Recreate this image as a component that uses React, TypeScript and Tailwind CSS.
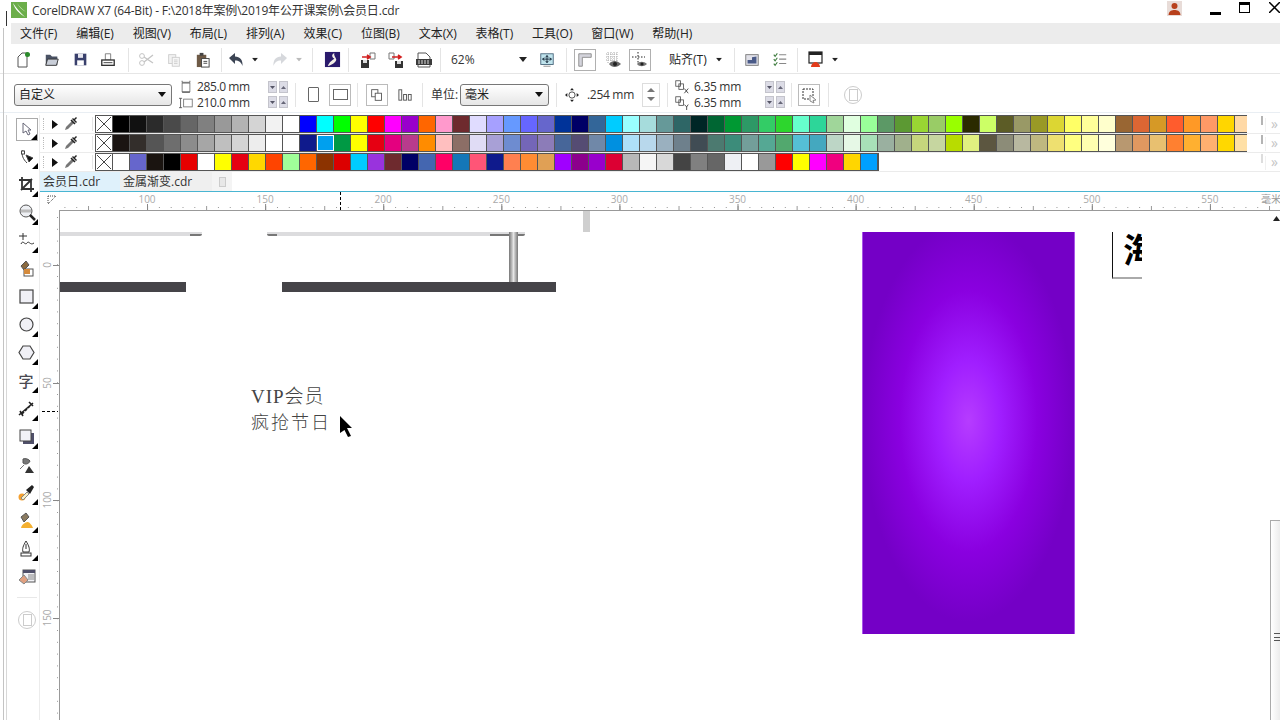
import type { ReactNode } from "react";

const row1 = [
	"#000000", "#111111", "#2b2b2b", "#4a4a4a", "#666666", "#808080", "#999999", "#b3b3b3", "#d4d4d4", "#f2f2f2", "#ffffff",
	"#0000ff", "#00ffff", "#00ff00", "#ffff00", "#ff0000", "#ff00ff", "#9900cc", "#ff6600", "#ff99cc", "#6e2a2e", "#e0dcff",
	"#a6a0ff", "#6699ff", "#6666ff", "#6666cc", "#003399", "#000066", "#336699", "#00ccff", "#99ffff", "#a6dcdc", "#669999",
	"#2e6666", "#002626", "#006633", "#009933", "#2d9966", "#33cc66", "#2dd62d", "#66ffcc", "#2dd699", "#a0d69a", "#e0ffe0",
	"#99ff99", "#5c9966", "#5c9933", "#99d633", "#99cc66", "#99ff00", "#2b2b00", "#ccff66", "#5c5c26", "#999966", "#999926",
	"#dcd633", "#ffff66", "#ffff99", "#ffffcc", "#996633", "#dc6633", "#d69926", "#ff5c2d", "#ff9926", "#ff9966", "#ffd600", "#ffd9a6",
];
const row2 = [
	"#1a1412", "#332e2b", "#555555", "#6e6e6e", "#8c8c8c", "#a6a6a6", "#bfbfbf", "#d4d4d4", "#ededed", "#ffffff", "#ffffff",
	"#0f1a8c", "#00a0ee", "#009944", "#ffff00", "#e60012", "#e4007f", "#b83b8c", "#ff8c00", "#ffbfbf", "#8c6e66", "#e0dcf5",
	"#a8a0d6", "#6e8cd0", "#7466b8", "#8c7cb8", "#476699", "#554c73", "#7088a8", "#0090e0", "#aee0f8", "#b8d8ec", "#9ab0bf",
	"#6e808c", "#404c54", "#4c7a70", "#3c8c7a", "#739e9a", "#55a894", "#52a86e", "#55bfd6", "#44a8bf", "#bdd6c6", "#e6f8e6",
	"#a8e0b8", "#9ab0a0", "#a0b08c", "#c6d67c", "#c6d6a0", "#b8dc00", "#e0f080", "#5c5640", "#8c8c78", "#b8b8a0", "#bfb880",
	"#eee070", "#ffff80", "#ffffb0", "#ffffdc", "#b89870", "#e09860", "#e8c070", "#ff8030", "#ffb030", "#ffb070", "#ffd800", "#ffe0a6",
];
const row3 = [
	"#ffffff", "#6666cc", "#1a1410", "#000000", "#e60000", "#ffffff", "#ffff00", "#e60012", "#ffd800", "#ff4400", "#a0ff99",
	"#ff6600", "#8c3300", "#dc0000", "#00ccff", "#9933dd", "#6e2a2e", "#000066", "#4466b0", "#ff0066", "#1477b8", "#ff5577",
	"#0f1a8c", "#ff8050", "#ff8c33", "#e0a055", "#a000ff", "#8c008c", "#9900cc", "#dc0033", "#b8b8b8", "#f5f5f5", "#d8d8d8",
	"#444444", "#808080", "#666666", "#eef0f4", "#ffffff", "#999999", "#ff0000", "#ffff00", "#ff00ff", "#f0007f", "#ffd600", "#00a0ff",
];

const menus = ["文件(F)", "编辑(E)", "视图(V)", "布局(L)", "排列(A)", "效果(C)", "位图(B)", "文本(X)", "表格(T)", "工具(O)", "窗口(W)", "帮助(H)"];

function Icon({ children, size = 18 }: { children: ReactNode; size?: number }) {
	return (
		<svg width={size} height={size} viewBox="0 0 18 18" fill="none">
			{children}
		</svg>
	);
}

function Cell({ w = "w-[28px]", children }: { w?: string; children: ReactNode }) {
	return <div className={`${w} h-full flex items-center justify-center shrink-0`}>{children}</div>;
}

function Sep() {
	return <div className="w-px h-[24px] bg-[#e4e4e4] shrink-0" />;
}

function DownArrow({ color = "#222" }: { color?: string }) {
	return (
		<svg width="8" height="5" viewBox="0 0 8 5">
			<path d="M0 0H8L4 5Z" fill={color} />
		</svg>
	);
}

function Spinner() {
	return (
		<div className="flex flex-col gap-[3px] shrink-0">
			{[0, 1].map((i) => (
				<div key={i} className="flex gap-[2px]">
					<div className="w-[9px] h-[12px] bg-[#dcdce6] border border-[#c4c4cc] flex items-center justify-center">
						<svg width="5" height="3" viewBox="0 0 5 3">
							<path d="M0 0H5L2.5 3Z" fill="#556" />
						</svg>
					</div>
					<div className="w-[9px] h-[12px] bg-[#dcdce6] border border-[#c4c4cc] flex items-center justify-center">
						<svg width="5" height="3" viewBox="0 0 5 3">
							<path d="M0 3H5L2.5 0Z" fill="#667" />
						</svg>
					</div>
				</div>
			))}
		</div>
	);
}

function Combo({ label, w }: { label: string; w: string }) {
	return (
		<div className={`${w} h-[22px] shrink-0 flex items-center justify-between px-[4px] border border-[#777] rounded-[3px] bg-linear-to-b from-white to-[#e6e6e6] text-[12px] text-[#222]`}>
			<span>{label}</span>
			<span className="mr-[1px] flex">
				<DownArrow color="#111" />
			</span>
		</div>
	);
}

function TitleBar() {
	return (
		<div className="h-[23px] flex items-center relative shrink-0">
			<div className="w-px h-[15px] bg-[#333] ml-[6px] mt-[14px]" />
			<svg className="ml-[4px] mb-[3px]" width="16" height="16" viewBox="0 0 16 16">
				<rect width="16" height="16" fill="#6cae4a" />
				<path d="M2 1C5 6 9 10 14 15C9 12 4 8 2 1Z" fill="#fff" />
				<path d="M6 1C8 4 11 7 15 10C11 8 8 5 6 1Z" fill="#dff0d0" />
			</svg>
			<span className="ml-[5px] mb-[2px] text-[12px] tracking-[-0.18px] text-[#333] whitespace-nowrap">CorelDRAW X7 (64-Bit) - F:\2018年案例\2019年公开课案例\会员日.cdr</span>
			<div className="ml-auto flex items-center">
				<svg width="15" height="15" viewBox="0 0 15 15" className="mb-[6px]">
					<rect width="15" height="15" fill="#e8dcd8" />
					<circle cx="7.5" cy="5" r="3" fill="#b8401c" />
					<path d="M1.5 14C2 9.5 5 9 7.5 9S13 9.5 13.5 14Z" fill="#b8401c" />
				</svg>
				<div className="w-[11px] h-[3px] bg-black ml-[28px] mt-[3px]" />
				<div className="w-[11px] h-[11px] border border-black border-t-[3px] ml-[18px] mb-[9px]" />
				<svg className="ml-[19px] mb-[9px]" width="11" height="11" viewBox="0 0 11 11">
					<path d="M0 0L11 11M11 0L0 11" stroke="#000" strokeWidth="1.5" />
				</svg>
			</div>
		</div>
	);
}

function MenuBar() {
	return (
		<div className="h-[21px] ml-[11px] pl-[9px] bg-[#ececec] flex items-center gap-[18.85px] text-[12px] text-[#222] shrink-0">
			{menus.map((m) => (
				<span key={m} className="whitespace-nowrap">
					{m}
				</span>
			))}
		</div>
	);
}

function MainToolbar() {
	return (
		<div className="h-[30px] pl-[10px] pt-[2px] flex items-center border-b border-[#e6e6e6] shrink-0">
			<Cell>
				<Icon>
					<path d="M3 16V6L7 2H12V16Z" fill="#fff" stroke="#555" />
					<circle cx="12.5" cy="3.5" r="2.5" fill="#2a8a2a" />
				</Icon>
			</Cell>
			<Cell>
				<Icon size={16}>
					<path d="M2 15V3H7L9 5H15V15Z" fill="#4a5264" />
					<path d="M2 15L4 8H16L14 15Z" fill="#c9ced8" stroke="#333" />
				</Icon>
			</Cell>
			<Cell>
				<Icon size={15}>
					<rect x="2" y="2" width="14" height="14" fill="#39406c" />
					<rect x="6" y="2" width="6" height="5" fill="#e6e6ee" />
					<rect x="5" y="10" width="8" height="6" fill="#fff" />
				</Icon>
			</Cell>
			<Cell>
				<Icon size={16}>
					<path d="M6 2H12V9H6Z" fill="#fff" stroke="#777" />
					<rect x="2" y="9" width="14" height="6" fill="#fff" stroke="#333" strokeWidth="1.5" />
					<path d="M4 12H14" stroke="#333" />
				</Icon>
			</Cell>
			<div className="w-[6px]" />
			<Sep />
			<div className="w-[3px]" />
			<Cell>
				<Icon>
					<path d="M16 4L7 11M16 12L7 6" stroke="#c4c4c4" strokeWidth="1.3" />
					<circle cx="5" cy="5" r="2.4" stroke="#c4c4c4" />
					<circle cx="5" cy="12" r="2.4" stroke="#c4c4c4" />
				</Icon>
			</Cell>
			<Cell>
				<Icon size={16}>
					<rect x="3" y="3" width="8" height="10" fill="#f2f2f2" stroke="#ccc" />
					<rect x="7" y="6" width="8" height="10" fill="#f6f6f6" stroke="#ccc" />
					<path d="M9 9H13M9 11H13M9 13H13" stroke="#ccc" />
				</Icon>
			</Cell>
			<Cell>
				<Icon size={17}>
					<rect x="3" y="4" width="10" height="13" fill="#6e5a46" />
					<rect x="6" y="2" width="4" height="3" fill="#444" />
					<rect x="8" y="8" width="8" height="9" fill="#fff" stroke="#444" />
					<path d="M10 11H14M10 13H14" stroke="#444" />
				</Icon>
			</Cell>
			<div className="w-[5px]" />
			<Sep />
			<div className="w-[3px]" />
			<Cell w="w-[22px]">
				<Icon>
					<path d="M2 7L8 2V5.5C13 5.5 16 9 15.5 15C14 11 12 9.5 8 9.5V13Z" fill="#3c4454" />
				</Icon>
			</Cell>
			<Cell w="w-[16px]">
				<span className="flex scale-75">
					<DownArrow />
				</span>
			</Cell>
			<div className="w-[6px]" />
			<Cell w="w-[22px]">
				<Icon>
					<path d="M16 7L10 2V5.5C5 5.5 2 9 2.5 15C4 11 6 9.5 10 9.5V13Z" fill="#d6d8dc" />
				</Icon>
			</Cell>
			<Cell w="w-[16px]">
				<span className="flex scale-75">
					<DownArrow color="#bbb" />
				</span>
			</Cell>
			<div className="w-[5px]" />
			<Sep />
			<div className="w-[5px]" />
			<Cell>
				<Icon size={17}>
					<rect x="1" y="1" width="16" height="16" fill="#2a1a6c" />
					<path d="M11 2C7 4 9 7 11 8C9 10 6 11 4 16C8 15 13 12 13 9C13 7 10 5 11 2Z" fill="#f4f0e8" />
				</Icon>
			</Cell>
			<div className="w-[2px]" />
			<Sep />
			<div className="w-[5px]" />
			<Cell>
				<Icon>
					<rect x="2" y="9" width="8" height="8" fill="#333" />
					<rect x="4" y="9" width="4" height="3" fill="#ddd" />
					<path d="M11 2H16V8H11Z" fill="#fff" stroke="#777" />
					<path d="M3 6H10M8 4L11 6L8 8" stroke="#d21f1f" strokeWidth="1.6" />
				</Icon>
			</Cell>
			<Cell>
				<Icon>
					<rect x="8" y="10" width="8" height="7" fill="#333" />
					<rect x="10" y="10" width="4" height="3" fill="#ddd" />
					<path d="M2 2H7V8H2Z" fill="#fff" stroke="#777" />
					<path d="M5 6H13M11 4L14 6L11 8" stroke="#d21f1f" strokeWidth="1.6" />
				</Icon>
			</Cell>
			<Cell>
				<Icon>
					<path d="M3 2H11L15 6V16H3Z" fill="#fff" stroke="#555" />
					<rect x="1" y="8" width="16" height="6" fill="#3b3b3b" />
					<path d="M3 10H15M3 12H15" stroke="#ddd" strokeDasharray="2 1" />
				</Icon>
			</Cell>
			<div className="w-[2px]" />
			<Sep />
			<div className="h-[22px] ml-[7px] pl-[3px] pr-[5px] flex items-center justify-between text-[12px] text-[#333] shrink-0 w-[84px]">
				<span>62%</span>
				<DownArrow />
			</div>
			<Cell w="w-[30px]">
				<Icon size={16}>
					<rect x="2" y="2" width="14" height="12" fill="#bfe3ec" stroke="#46647a" />
					<path d="M9 4V12M4 8H14M9 4L7.5 6M9 4L10.5 6M9 12L7.5 10M9 12L10.5 10M4 8L6 6.5M4 8L6 9.5M14 8L12 6.5M14 8L12 9.5" stroke="#123" />
					<path d="M5 16H13" stroke="#888" />
				</Icon>
			</Cell>
			<div className="w-[4px]" />
			<Sep />
			<div className="w-[7px]" />
			<div className="w-[22px] h-[22px] border border-[#b0b0b0] flex items-center justify-center shrink-0">
				<Icon size={16}>
					<path d="M2 2H16V6H6V16H2Z" fill="#d4d4dc" stroke="#888" />
				</Icon>
			</div>
			<div className="w-[6px]" />
			<div className="w-[22px] flex justify-center shrink-0">
				<Icon>
					<path d="M2 3H14M2 6H14M2 9H14M4 1V12M7 1V12M10 1V12M13 1V12" stroke="#aaa" strokeDasharray="1 1" />
					<path d="M5 13C8 9 13 9 17 13C13 17 8 17 5 13Z" fill="#666" />
					<circle cx="11" cy="13" r="2" fill="#222" />
				</Icon>
			</div>
			<div className="w-[5px]" />
			<div className="w-[22px] h-[22px] border border-[#b0b0b0] flex items-center justify-center shrink-0">
				<Icon>
					<path d="M7 1V12M1 6H14" stroke="#222" strokeDasharray="1.5 1.5" />
					<path d="M6 13C8 10 13 10 16 13C13 16 8 16 6 13Z" fill="#777" />
					<circle cx="11" cy="13" r="1.6" fill="#222" />
				</Icon>
			</div>
			<span className="ml-[18px] text-[12px] text-[#222] w-[42px] shrink-0 whitespace-nowrap">贴齐(T)</span>
			<div className="ml-[4px] flex w-[12px]">
				<span className="flex scale-75">
					<DownArrow />
				</span>
			</div>
			<div className="w-[7px]" />
			<Sep />
			<div className="w-[3px]" />
			<Cell>
				<Icon size={16}>
					<rect x="2" y="3" width="14" height="12" fill="#e0e0e8" stroke="#777" />
					<path d="M4 13V9H9V6L14 5V13Z" fill="#4a5a88" />
				</Icon>
			</Cell>
			<Cell>
				<Icon size={16}>
					<path d="M2 3L3.5 5L6 1.5M2 8L3.5 10L6 6.5M2 13L3.5 15L6 11.5" stroke="#3c7a3c" strokeWidth="1.2" />
					<path d="M8 3H16M8 8H16M8 13H16" stroke="#888" strokeWidth="1.2" />
				</Icon>
			</Cell>
			<div className="w-[3px]" />
			<Sep />
			<div className="w-[4px]" />
			<Cell>
				<Icon>
					<rect x="2" y="1" width="13" height="11" fill="#fff" stroke="#222" strokeWidth="1.2" />
					<rect x="2" y="1" width="13" height="3" fill="#222" />
					<path d="M4 16C4 13 7 11 8.5 11C10 11 13 13 13 16Z" fill="#e33c1c" />
				</Icon>
			</Cell>
			<div className="ml-[1px] flex">
				<span className="flex scale-75">
					<DownArrow />
				</span>
			</div>
		</div>
	);
}

function PropertyBar() {
	return (
		<div className="h-[39px] pl-[14px] pt-[3px] flex items-center border-b border-[#e9eef3] text-[12px] text-[#333] shrink-0">
			<Combo label="自定义" w="w-[158px]" />
			<div className="w-[7px] shrink-0" />
			<div className="flex flex-col gap-[2px] w-[18px] shrink-0">
				<Icon size={14}>
					<path d="M4 3H14M4 1V3M14 1V3M4 16H14" stroke="#444" />
					<rect x="4" y="4" width="10" height="11" stroke="#666" />
				</Icon>
				<Icon size={14}>
					<path d="M2 3V15M0 3H4M0 15H4" stroke="#444" />
					<rect x="6" y="4" width="11" height="10" stroke="#666" />
				</Icon>
			</div>
			<div className="w-[66px] flex flex-col leading-[16px] tracking-[-0.4px] shrink-0">
				<span>285.0 mm</span>
				<span>210.0 mm</span>
			</div>
			<div className="w-[5px] shrink-0" />
			<Spinner />
			<div className="w-[7px] shrink-0" />
			<Sep />
			<div className="w-[12px] shrink-0" />
			<div className="w-[11px] h-[15px] border border-[#666] rounded-[1px] shrink-0" />
			<div className="w-[10px] shrink-0" />
			<div className="w-[22px] h-[22px] border border-[#bbb] flex items-center justify-center shrink-0">
				<div className="w-[15px] h-[11px] border border-[#666]" />
			</div>
			<div className="w-[6px] shrink-0" />
			<Sep />
			<div className="w-[8px] shrink-0" />
			<div className="w-[22px] h-[22px] border border-[#bbb] flex items-center justify-center shrink-0">
				<Icon size={16}>
					<rect x="3" y="3" width="7" height="8" fill="#fff" stroke="#555" />
					<rect x="7" y="7" width="7" height="8" fill="#fff" stroke="#555" />
				</Icon>
			</div>
			<div className="w-[7px] shrink-0" />
			<div className="w-[20px] flex justify-center shrink-0">
				<Icon size={17}>
					<rect x="2" y="4" width="3" height="11" stroke="#555" />
					<rect x="7" y="9" width="3" height="6" stroke="#555" />
					<rect x="12" y="9" width="3" height="6" stroke="#555" />
				</Icon>
			</div>
			<div className="w-[7px] shrink-0" />
			<Sep />
			<span className="ml-[8px] w-[29px] shrink-0 whitespace-nowrap">单位:</span>
			<Combo label="毫米" w="w-[89px]" />
			<div className="w-[7px] shrink-0" />
			<Sep />
			<div className="w-[8px] shrink-0" />
			<div className="w-[14px] flex shrink-0">
				<Icon size={14}>
					<circle cx="9" cy="9" r="4" stroke="#222" />
					<path d="M9 0L6.5 3H11.5ZM9 18L6.5 15H11.5ZM0 9L3 6.5V11.5ZM18 9L15 6.5V11.5Z" fill="#222" />
				</Icon>
			</div>
			<span className="ml-[8px] w-[55px] shrink-0 whitespace-nowrap tracking-[-0.3px]">.254 mm</span>
			<div className="w-[18px] h-[24px] border border-[#ddd] flex flex-col items-center justify-evenly shrink-0">
				<svg width="8" height="4" viewBox="0 0 8 4">
					<path d="M0 4H8L4 0Z" fill="#777" />
				</svg>
				<svg width="8" height="4" viewBox="0 0 8 4">
					<path d="M0 0H8L4 4Z" fill="#777" />
				</svg>
			</div>
			<div className="w-[7px] shrink-0" />
			<Sep />
			<div className="w-[7px] shrink-0" />
			<div className="flex flex-col gap-[2px] w-[19px] shrink-0">
				<Icon size={14}>
					<rect x="1" y="1" width="6" height="7" stroke="#444" />
					<rect x="5" y="5" width="6" height="7" stroke="#444" />
					<path d="M12 11L17 17M17 11L12 17" stroke="#222" />
				</Icon>
				<Icon size={14}>
					<rect x="1" y="1" width="6" height="7" stroke="#444" />
					<rect x="5" y="5" width="6" height="7" stroke="#444" />
					<path d="M12 11L15 14L17 11M15 14V18" stroke="#222" />
				</Icon>
			</div>
			<div className="w-[71px] flex flex-col leading-[16px] tracking-[-0.3px] shrink-0">
				<span>6.35 mm</span>
				<span>6.35 mm</span>
			</div>
			<Spinner />
			<div className="w-[6px] shrink-0" />
			<Sep />
			<div className="w-[6px] shrink-0" />
			<div className="w-[22px] h-[22px] border border-[#bbb] flex items-center justify-center shrink-0">
				<Icon size={18}>
					<rect x="3" y="3" width="10" height="10" stroke="#333" strokeDasharray="2 1" />
					<path d="M10 9L16 14L13 14.5L14 17L10 15Z" fill="#fff" stroke="#888" />
				</Icon>
			</div>
			<div className="w-[8px] shrink-0" />
			<Sep />
			<div className="w-[15px] shrink-0" />
			<div className="w-[18px] h-[18px] rounded-full border border-[#ccc] flex items-center justify-center shrink-0">
				<div className="w-[9px] h-[12px] border border-[#ccc]" />
			</div>
		</div>
	);
}

function Eyedropper() {
	return (
		<svg width="14" height="14" viewBox="0 0 14 14">
			<path d="M1 13L2 10L8 4L10 6L4 12Z" fill="#777" />
			<path d="M8 2L12 6L13 5L11 3L13 1L12 0L10 2L9 1Z" fill="#222" />
			<path d="M7 3L11 7" stroke="#222" strokeWidth="1.6" />
		</svg>
	);
}

function Swatches({ colors, first, selected }: { colors: string[]; first?: boolean; selected?: number }) {
	return (
		<div className={`h-[18px] flex border border-[#555] overflow-hidden ${first ? "w-[1152px] border-r-0" : "w-fit"}`}>
			<div className="w-[17px] h-full bg-white border-r border-[#555] shrink-0">
				<svg width="16" height="16" viewBox="0 0 16 16">
					<path d="M1 1L15 15M15 1L1 15" stroke="#444" />
				</svg>
			</div>
			{colors.map((c, i) => (
				<div
					key={i}
					className={`w-[17px] h-full shrink-0 border-r ${selected === i ? "border border-white" : "border-[#555]"}`}
					style={{ backgroundColor: c }}
				/>
			))}
		</div>
	);
}

function PaletteRow({ colors, first, selected, faded }: { colors: string[]; first?: boolean; selected?: number; faded?: boolean }) {
	return (
		<div className="h-[19px] flex items-center border-b border-[#ebebeb]">
			<div className="w-[9px] h-[12px] ml-[3px] border-l border-dotted border-[#bbb] shrink-0" />
			<svg className="shrink-0" width="6" height="9" viewBox="0 0 6 9">
				<path d="M0 0L6 4.5L0 9Z" fill="#111" />
			</svg>
			<span className="ml-[6px] flex shrink-0">
				<Eyedropper />
			</span>
			<div className="w-[15px] h-[14px] border-r border-[#e4e4e4] shrink-0" />
			<div className="w-[2px] shrink-0" />
			<Swatches colors={colors} first={first} selected={selected} />
			<div className="ml-auto flex items-center">
				<div className={`w-[2px] h-[9px] mb-[7px] ${faded ? "bg-[#ddd]" : "bg-[#b4b4b4]"}`} />
				<div className="w-[15px] h-[14px] border-l border-[#f0f0f0] ml-[2px] text-[14px] leading-[12px] text-[#c4c4c4] pl-[5px] mt-[2px]">»</div>
			</div>
		</div>
	);
}

function TabStrip() {
	return (
		<div className="h-[20px] flex text-[12px] text-[#333] border-b border-[#49b5d2] shrink-0">
			<div className="w-[80px] bg-[#dff1fb] pl-[3px] leading-[20px]">会员日.cdr</div>
			<div className="w-[92px] bg-[#efefef] pl-[3px] leading-[20px] whitespace-nowrap">金属渐变.cdr</div>
			<div className="w-[20px] bg-[#f4f4f4] flex items-center justify-center">
				<div className="w-[7px] h-[10px] bg-[#e8e8e8] border border-[#ccc]" />
			</div>
		</div>
	);
}

function TopRuler() {
	const ticks = Array.from({ length: 103 }, (_, i) => i);
	const majors = [100, 150, 200, 250, 300, 350, 400, 450, 500, 550];
	return (
		<svg className="shrink-0 block" width="1240" height="19" viewBox="0 0 1240 19">
			{ticks.map((i) => (
				<rect key={i} x={24.4 + i * 11.81} y={i % 5 === 2 ? 14 : 15} width="1" height={i % 5 === 2 ? 4 : 1} fill="#999" />
			))}
			{majors.map((v, i) => (
				<g key={v}>
					<rect x={107 + i * 118.1} y="12" width="1" height="6" fill="#888" />
					<text x={107 + i * 118.1} y="11" textAnchor="middle" fontSize="10" fill="#aaa" fontFamily="Open Sans, sans-serif">
						{v}
					</text>
				</g>
			))}
			<text x="1221" y="11" fontSize="10" fill="#999" fontFamily="Noto Sans CJK SC, sans-serif">
				毫米
			</text>
			<path d="M300.5 0V18" stroke="#000" strokeDasharray="3 2" />
			<rect x="19" y="18" width="1221" height="1" fill="#999" />
			<g stroke="#444" strokeDasharray="1 1">
				<path d="M8 4H16M8 4V12" />
				<path d="M8 12L16 4" />
			</g>
		</svg>
	);
}

function SideRuler() {
	const dots = Array.from({ length: 44 }, (_, i) => i);
	const labels = [
		{ y: 54, t: "0" },
		{ y: 172, t: "50" },
		{ y: 289, t: "100" },
		{ y: 407, t: "150" },
	];
	return (
		<svg className="shrink-0 block" width="20" height="510" viewBox="0 0 20 510">
			{dots.map((i) => (
				<rect key={i} x="17" y={6 + i * 11.8} width="1" height="1" fill="#999" />
			))}
			{labels.map((l) => (
				<g key={l.t}>
					<rect x="13" y={l.y} width="6" height="1" fill="#888" />
					<text transform={`rotate(-90 11 ${l.y})`} x="11" y={l.y} textAnchor="middle" fontSize="10" fill="#aaa" fontFamily="Open Sans, sans-serif">
						{l.t}
					</text>
				</g>
			))}
			<path d="M2 200.5H18" stroke="#000" strokeDasharray="3 2" />
			<rect x="19" y="0" width="1" height="510" fill="#999" />
		</svg>
	);
}

function Canvas() {
	return (
		<div className="relative flex-1 bg-white overflow-hidden">
			{/* shelf: light rail, dark base and the metal post */}
			<div className="absolute left-0 top-[21px] w-[142px] h-[4px] bg-[#dcdcde] rounded-br-[4px]" />
			<div className="absolute left-[130px] top-[23px] w-[12px] h-[2px] bg-[#777] rounded-br-[3px]" />
			<div className="absolute left-[207px] top-[21px] w-[258px] h-[4px] bg-[#dcdcde] rounded-b-[3px]" />
			<div className="absolute left-[207px] top-[23px] w-[10px] h-[2px] bg-[#777] rounded-bl-[3px]" />
			<div className="absolute left-[430px] top-[23px] w-[35px] h-[2px] bg-[#777] rounded-br-[3px]" />
			<div className="absolute left-[449px] top-[21px] w-[9px] h-[50px] bg-linear-to-r from-[#777] via-[#e6e6e6] to-[#777]" />
			<div className="absolute left-0 top-[71px] w-[126px] h-[10px] bg-[#454448]" />
			<div className="absolute left-[222px] top-[71px] w-[274px] h-[10px] bg-[#454448]" />
			<div className="absolute left-[523px] top-0 w-[7px] h-[21px] bg-[#cfcfcf]" />

			{/* text block */}
			<div className="absolute left-[191px] top-[173px] text-[#444] leading-[26px] whitespace-nowrap">
				<div className="text-[19px] tracking-[1px] font-['Liberation_Serif','Noto_Sans_CJK_SC',serif] font-light">VIP会员</div>
				<div className="text-[18px] tracking-[2px] font-['Liberation_Serif','Noto_Sans_CJK_SC',serif] font-light">疯抢节日</div>
			</div>

			{/* cursor */}
			<svg className="absolute left-[280px] top-[205px]" width="13" height="22" viewBox="0 0 13 22">
				<path d="M0 0L12 12H7L11 20L8 21L4.5 14L0 17Z" fill="#000" />
			</svg>

			{/* purple card */}
			<div className="absolute left-[802px] top-[21px] w-[213px] h-[402px] border-x border-[#a955e8] bg-[radial-gradient(ellipse_50%_50%_at_50%_47%,#b63cff_0%,#a01eff_30%,#8a00e0_65%,#7400c6_100%)]" />

			{/* clipped poster title */}
			<div className="absolute left-[1052px] top-[21px] w-[30px] h-[47px] border-l border-[#111] border-b-2 border-b-[#aaa] overflow-hidden">
				<span className="block ml-[10px] -mt-[3px] text-[34px] leading-[40px] font-bold text-black font-['Noto_Sans_CJK_SC',sans-serif]">海</span>
			</div>

			{/* page edge on the right */}
			<div className="absolute left-[1210px] top-[309px] w-[10px] h-[200px] border-l border-t border-[#aaa] bg-linear-to-r from-white to-[#ececec]" />
			<div className="absolute left-[1214px] top-[422px] w-[6px] h-[8px] border-y border-[#555] flex items-center">
				<div className="w-full h-px bg-[#555]" />
			</div>
			<svg className="absolute left-[1213px] top-[5px]" width="7" height="5" viewBox="0 0 7 5">
				<path d="M0 5L3.5 0L7 5Z" fill="#222" />
			</svg>
		</div>
	);
}

const tools: { icon: ReactNode; boxed?: boolean; flag?: boolean }[] = [
	{
		boxed: true,
		flag: true,
		icon: (
			<Icon>
				<path d="M5 3L5 13L8 11L10 15L12 14L10 10L13 10Z" fill="#fff" stroke="#667" />
			</Icon>
		),
	},
	{
		flag: true,
		icon: (
			<Icon>
				<g stroke="#444">
					<path d="M5 2C3 7 5 11 9 15" />
					<rect x="3.5" y="3" width="3" height="3" fill="#fff" />
					<path d="M8 7L15 10L11 14Z" fill="#111" />
				</g>
			</Icon>
		),
	},
	{
		flag: true,
		icon: (
			<Icon>
				<path d="M4 1V13H16M1 4H13V16M3 14L14 3" stroke="#333" strokeWidth="1.8" />
			</Icon>
		),
	},
	{
		flag: true,
		icon: (
			<Icon>
				<circle cx="8" cy="7" r="6" fill="#eef0f4" stroke="#555" />
				<path d="M3 7H13" stroke="#bbb" strokeWidth="3" />
				<path d="M12 11L17 16" stroke="#222" strokeWidth="2.5" />
			</Icon>
		),
	},
	{
		flag: true,
		icon: (
			<Icon>
				<g stroke="#333">
					<path d="M5 1V8M1 4H9" />
					<path d="M3 12C5 7 7 14 9 11C11 8 12 14 16 11" fill="none" />
				</g>
			</Icon>
		),
	},
	{
		icon: (
			<Icon>
				<path d="M3 6L8 1L11 5L6 10Z" fill="#8a6a40" stroke="#555" />
				<rect x="6" y="9" width="9" height="7" fill="#fff" stroke="#555" />
				<path d="M6 9H12V14H6Z" fill="#d48a3c" />
			</Icon>
		),
	},
	{
		flag: true,
		icon: (
			<Icon>
				<rect x="2" y="2" width="13" height="13" fill="#f0f0f6" stroke="#444" strokeWidth="1.2" />
			</Icon>
		),
	},
	{
		flag: true,
		icon: (
			<Icon>
				<circle cx="8.5" cy="8.5" r="6.5" fill="#f0f0f6" stroke="#444" strokeWidth="1.2" />
			</Icon>
		),
	},
	{
		flag: true,
		icon: (
			<Icon>
				<path d="M5 2H12L16 8.5L12 15H5L1 8.5Z" fill="#f0f0f6" stroke="#444" strokeWidth="1.2" />
			</Icon>
		),
	},
	{
		flag: true,
		icon: <span className="text-[15px] leading-[18px] font-medium text-[#4a4a52] mr-[2px]">字</span>,
	},
	{
		flag: true,
		icon: (
			<Icon>
				<path d="M1 15L15 3M2 11L5 16M11 2L15 6M4 14L6 12M7 11L9 9M10 8L12 6" stroke="#222" strokeWidth="1.6" />
			</Icon>
		),
	},
	{
		flag: true,
		icon: (
			<Icon>
				<rect x="5" y="5" width="11" height="11" fill="#50506a" />
				<rect x="2" y="2" width="11" height="11" fill="#f2f2f8" stroke="#444" />
			</Icon>
		),
	},
	{
		icon: (
			<Icon>
				<path d="M5 3C7 2 11 3 12 5C11 8 7 9 5 7Z" fill="#777" stroke="#555" />
				<path d="M6 9L2 13" stroke="#777" />
				<path d="M11 10L16 17H7Z" fill="#333" />
			</Icon>
		),
	},
	{
		flag: true,
		icon: (
			<Icon>
				<circle cx="4" cy="13" r="3.5" fill="#f4a030" />
				<path d="M3 14L9 8L11 10L5 16Z" fill="#f8f0c8" stroke="#888" />
				<path d="M8 6L12 10L16 3L14 1Z" fill="#222" />
			</Icon>
		),
	},
	{
		flag: true,
		icon: (
			<Icon>
				<path d="M3 5L8 1L11 5L6 10Z" fill="#8a7a60" stroke="#555" />
				<path d="M3 16C4 11 9 10 10 10C11 10 14 13 15 16Z" fill="#f4b030" />
			</Icon>
		),
	},
	{
		flag: true,
		icon: (
			<Icon>
				<g stroke="#333" fill="#fff">
					<path d="M8 1C5 6 4 9 5 12H11C12 9 11 6 8 1Z" />
					<path d="M8 4V9" />
					<rect x="3" y="13" width="10" height="3" />
				</g>
			</Icon>
		),
	},
	{
		icon: (
			<Icon>
				<rect x="5" y="2" width="12" height="12" fill="#f2f2f6" stroke="#555" />
				<rect x="5" y="2" width="12" height="3" fill="#50506a" />
				<path d="M10 7H16M10 9H16M10 11H16" stroke="#888" />
				<path d="M1 12L6 7L10 12L6 16Z" fill="#e0a080" stroke="#888" />
			</Icon>
		),
	},
];

function LeftToolbar() {
	return (
		<div className="w-[40px] relative shrink-0 flex flex-col items-center pl-[14px]">
			<div className="absolute left-[6px] top-0 bottom-0 w-px bg-[#d8d8d8]" />
			<div className="absolute right-0 top-0 bottom-0 w-px bg-[#ececec]" />
			{tools.map((t, i) => (
				<div key={i} className="h-[28px] w-[26px] flex items-center justify-center shrink-0">
					<div className={`relative w-[22px] h-[23px] flex items-center justify-center ${t.boxed ? "border border-[#aaa]" : ""}`}>
						{t.icon}
						{t.flag && (
							<svg className="absolute right-0 bottom-0" width="6" height="6" viewBox="0 0 6 6">
								<path d="M6 0V6H0Z" fill="#000" />
							</svg>
						)}
					</div>
				</div>
			))}
			<div className="w-[20px] h-px bg-[#e8e8e8] mt-[6px]" />
			<div className="w-[18px] h-[18px] mt-[13px] rounded-full border border-[#ccc] flex items-center justify-center">
				<div className="w-[9px] h-[12px] border border-[#ccc]" />
			</div>
		</div>
	);
}

export default function App() {
	return (
		<div className="relative w-[1280px] h-[720px] overflow-hidden bg-white flex flex-col font-['Open_Sans','Noto_Sans_CJK_SC',sans-serif]">
			{/* window edge */}
			<div className="absolute left-[3px] top-[28px] bottom-0 w-px bg-[#c4c4c4]" />
			<TitleBar />
			<MenuBar />
			<MainToolbar />
			<PropertyBar />
			<div className="flex flex-1 min-h-0 pt-[2px]">
				<LeftToolbar />
				<div className="flex-1 min-w-0 flex flex-col">
					<PaletteRow colors={row1} first />
					<PaletteRow colors={row2} first selected={12} />
					<PaletteRow colors={row3} faded />
					<TabStrip />
					<TopRuler />
					<div className="flex flex-1 min-h-0">
						<SideRuler />
						<Canvas />
					</div>
				</div>
			</div>
		</div>
	);
}
